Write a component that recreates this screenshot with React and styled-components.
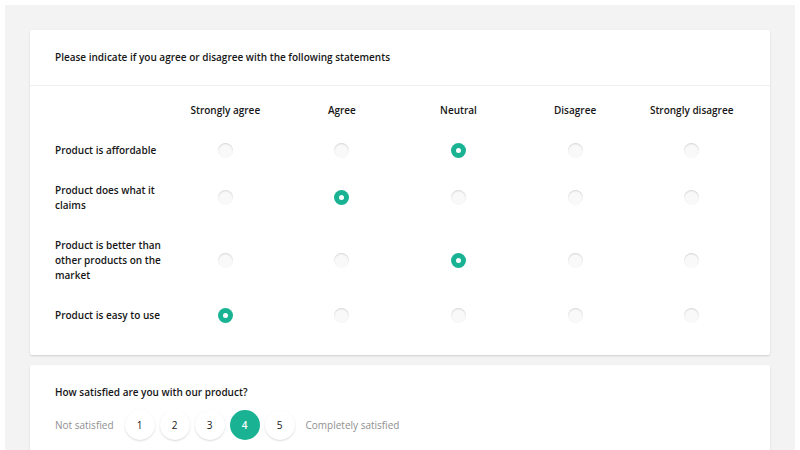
import React from "react";
import styled, { createGlobalStyle } from "styled-components";

const GlobalStyle = createGlobalStyle`
  html, body {
    margin: 0;
    padding: 0;
    background: #ffffff;
  }
  body {
    font-family: "Open Sans", "Liberation Sans", sans-serif;
    color: #161616;
  }
`;

const columns = ["Strongly agree", "Agree", "Neutral", "Disagree", "Strongly disagree"];

const rows = [
  { label: "Product is affordable", value: 2 },
  { label: "Product does what it claims", value: 1 },
  { label: "Product is better than other products on the market", value: 2 },
  { label: "Product is easy to use", value: 0 },
];

const App = () => {
  return (
    <>
      <GlobalStyle />
      <Page>
        <Card>
          <CardHeader>
            <Title>Please indicate if you agree or disagree with the following statements</Title>
          </CardHeader>
          <Matrix>
            <HeadCell />
            {columns.map((c) => (
              <HeadCell key={c}>{c}</HeadCell>
            ))}
            {rows.map((r) => (
              <React.Fragment key={r.label}>
                <RowLabel>{r.label}</RowLabel>
                {columns.map((c, i) => (
                  <RadioCell key={c}>
                    <Radio $checked={i === r.value} />
                  </RadioCell>
                ))}
              </React.Fragment>
            ))}
          </Matrix>
        </Card>

        <Card>
          <Question>
            <Title>How satisfied are you with our product?</Title>
            <Rating>
              <RatingText>Not satisfied</RatingText>
              {[1, 2, 3, 4, 5].map((n) => (
                <RatingItem key={n} $selected={n === 4}>
                  {n}
                </RatingItem>
              ))}
              <RatingText>Completely satisfied</RatingText>
            </Rating>
          </Question>
        </Card>
      </Page>
    </>
  );
};

export default App;

const Page = styled.div`
  margin: 5px;
  padding: 25px;
  background: #f3f3f3;
  min-height: 600px;
  display: flex;
  flex-direction: column;
  gap: 10px;
`;

const Card = styled.section`
  background: #ffffff;
  box-shadow: 0 1px 2px rgba(0, 0, 0, 0.15);
  border-radius: 2px;
`;

const CardHeader = styled.div`
  padding: 20px 25px;
  border-bottom: 1px solid #efefef;
`;

const Title = styled.div`
  font-size: 10px;
  line-height: 15px;
  font-weight: 600;
  color: #161616;
`;

const Matrix = styled.div`
  display: grid;
  grid-template-columns: 112px repeat(5, 1fr);
  align-items: center;
  padding: 4px 20px 20px 25px;
`;

const HeadCell = styled.div`
  padding: 12.5px 0;
  font-size: 10px;
  line-height: 15px;
  font-weight: 600;
  text-align: center;
`;

const RowLabel = styled.div`
  padding: 12.5px 4px 12.5px 0;
  font-size: 10px;
  line-height: 15px;
  font-weight: 600;
`;

const RadioCell = styled.div`
  display: flex;
  justify-content: center;
  align-items: center;
`;

const Radio = styled.span`
  position: relative;
  width: 15px;
  height: 15px;
  border-radius: 50%;
  background: ${(p) => (p.$checked ? "#19b394" : "#f9f9f9")};
  box-shadow: ${(p) => (p.$checked ? "none" : "inset 0 1px 1.5px rgba(0, 0, 0, 0.15)")};

  &::after {
    content: "";
    display: ${(p) => (p.$checked ? "block" : "none")};
    position: absolute;
    left: 5px;
    top: 5px;
    width: 5px;
    height: 5px;
    border-radius: 50%;
    background: #ffffff;
  }
`;

const Question = styled.div`
  padding: 20px 25px 20px;
  display: flex;
  flex-direction: column;
  gap: 10px;
`;

const Rating = styled.div`
  display: flex;
  align-items: center;
  gap: 5px;
`;

const RatingText = styled.span`
  font-size: 10px;
  line-height: 15px;
  color: #909090;
  margin: 0 6px;

  &:first-child {
    margin-left: 0;
  }
`;

const RatingItem = styled.div`
  width: 30px;
  height: 30px;
  border-radius: 50%;
  display: flex;
  align-items: center;
  justify-content: center;
  font-size: 10px;
  font-weight: ${(p) => (p.$selected ? 600 : 400)};
  color: ${(p) => (p.$selected ? "#ffffff" : "#161616")};
  background: ${(p) => (p.$selected ? "#19b394" : "#ffffff")};
  box-shadow: ${(p) => (p.$selected ? "none" : "0 1px 2px rgba(0, 0, 0, 0.15)")};
`;
